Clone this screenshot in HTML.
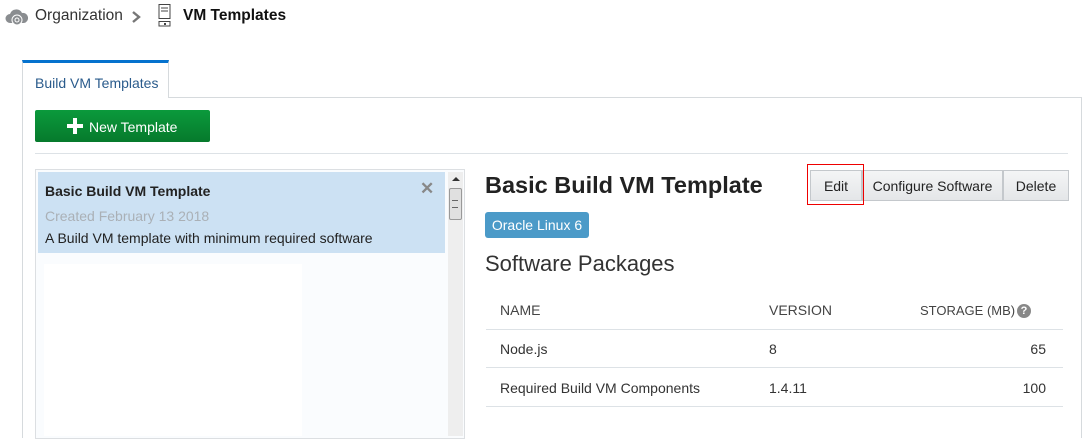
<!DOCTYPE html>
<html><head><style>
body{margin:0;width:1085px;height:436px;overflow:hidden;background:#fff;font-family:"Liberation Sans",sans-serif;color:#333;position:relative}
.a{position:absolute}
.btn{position:absolute;top:170px;height:31px;border:1px solid #c4c8cc;background:linear-gradient(#f4f5f6,#e4e6e8);font-size:14px;line-height:31px;text-align:center;color:#222;box-sizing:border-box}
.hl{position:absolute;left:486px;width:577px;height:1px;background:#dde2e6}
.t{position:absolute;font-size:14px;color:#333}
</style></head><body>
<svg class="a" style="left:5px;top:7px" width="24" height="20" viewBox="0 0 24 20"><path d="M5 16a4.5 4.5 0 0 1 0-9a6.5 6.5 0 0 1 12-1a5 5 0 0 1 2 10z" fill="#8a8d90"/><circle cx="12" cy="13" r="5" fill="#8a8d90" stroke="#fff" stroke-width="1"/><circle cx="12" cy="13" r="2" fill="none" stroke="#fff"/></svg>
<div class="a" style="left:35px;top:7px;font-size:15.5px;color:#333">Organization</div>
<svg class="a" style="left:130px;top:10px" width="12" height="14"><path d="M3 2l6 5-6 5" fill="none" stroke="#777" stroke-width="2.4"/></svg>
<svg class="a" style="left:158px;top:4px" width="14" height="23"><rect x="1" y="0.5" width="11" height="14" fill="none" stroke="#444"/><path d="M3 4h7M3 7h7" stroke="#444"/><rect x="1" y="17.5" width="11" height="4.5" fill="none" stroke="#444"/><rect x="6" y="19" width="2" height="2" fill="#444"/></svg>
<div class="a" style="left:183px;top:7px;font-size:15.5px;font-weight:bold;color:#111">VM Templates</div>

<div class="a" style="left:22px;top:97px;width:1058px;height:340px;border-left:1px solid #d6dadd;border-right:1px solid #d6dadd;border-top:1px solid #d6dadd"></div>
<div class="a" style="left:22px;top:60px;width:147px;height:38px;background:#fff;border-left:1px solid #d6dadd;border-right:1px solid #d6dadd;border-top:3px solid #0572ce;box-sizing:border-box"></div>
<div class="a" style="left:35px;top:75px;font-size:14px;color:#2a5b8c">Build VM Templates</div>

<div class="a" style="left:35px;top:110px;width:175px;height:32px;background:linear-gradient(#0b9a3c,#067a2c);border-radius:2px;color:#fff;font-size:14px;line-height:32px"><span style="position:absolute;left:32px;top:8px;width:16px;height:16px"><span class="a" style="left:6px;top:0;width:4px;height:16px;background:#fff"></span><span class="a" style="left:0;top:6px;width:16px;height:4px;background:#fff"></span></span><span style="position:absolute;left:54px;top:1px">New Template</span></div>
<div class="a" style="left:35px;top:153px;width:1033px;height:1px;background:#dde2e6"></div>

<div class="a" style="left:35px;top:169px;width:430px;height:270px;border:1px solid #dcdfe2;background:#fafcfe;box-sizing:border-box"></div>
<div class="a" style="left:44px;top:264px;width:258px;height:172px;background:#fff"></div>
<div class="a" style="left:38px;top:172px;width:407px;height:81px;background:#cce1f3"></div>
<div class="a" style="left:45px;top:183px;font-size:14px;font-weight:bold;color:#222">Basic Build VM Template</div>
<div class="a" style="left:420px;top:179px;font-size:17px;font-weight:bold;color:#888">✕</div>
<div class="a" style="left:45px;top:208px;font-size:14px;color:#aab0b6">Created February 13 2018</div>
<div class="a" style="left:45px;top:230px;font-size:14px;color:#222">A Build VM template with minimum required software</div>
<div class="a" style="left:448px;top:172px;width:15px;height:264px;background:#eeeeee"></div>
<div class="a" style="left:452px;top:177px;width:0;height:0;border-left:4px solid transparent;border-right:4px solid transparent;border-bottom:4px solid #333"></div>
<div class="a" style="left:449px;top:188px;width:13px;height:32px;background:#e0e0e0;border:1px solid #999;box-sizing:border-box;border-radius:2px"></div>
<div class="a" style="left:452px;top:200px;width:6px;height:6px;border-top:1px solid #666;border-bottom:1px solid #666"></div>

<div class="a" style="left:485px;top:172px;font-size:23.5px;font-weight:bold;color:#222">Basic Build VM Template</div>
<div class="btn" style="left:810px;width:52px">Edit</div>
<div class="btn" style="left:862px;width:141px">Configure Software</div>
<div class="btn" style="left:1003px;width:66px">Delete</div>
<div class="a" style="left:807px;top:164px;width:57px;height:41px;border:1px solid #e00;box-sizing:border-box"></div>
<div class="a" style="left:485px;top:212px;width:104px;height:26px;background:#4b9ac8;border-radius:3px;color:#fff;font-size:14px;line-height:26px;text-align:center">Oracle Linux 6</div>
<div class="a" style="left:485px;top:251px;font-size:22px;font-weight:300;color:#333">Software Packages</div>
<div class="t" style="left:500px;top:302px;color:#444">NAME</div>
<div class="t" style="left:769px;top:302px;color:#444">VERSION</div>
<div class="t" style="left:920px;top:302px;color:#444;font-size:13px;top:303px">STORAGE (MB)</div>
<div class="a" style="left:1017px;top:304px;width:14px;height:14px;border-radius:50%;background:#888;color:#fff;font-size:11px;font-weight:bold;line-height:14px;text-align:center">?</div>
<div class="hl" style="top:329px"></div>
<div class="t" style="left:500px;top:341px">Node.js</div>
<div class="t" style="left:769px;top:341px">8</div>
<div class="t" style="left:946px;width:100px;text-align:right;top:341px">65</div>
<div class="hl" style="top:367px"></div>
<div class="t" style="left:500px;top:380px">Required Build VM Components</div>
<div class="t" style="left:769px;top:380px">1.4.11</div>
<div class="t" style="left:946px;width:100px;text-align:right;top:380px">100</div>
<div class="hl" style="top:406px"></div>
</body></html>
